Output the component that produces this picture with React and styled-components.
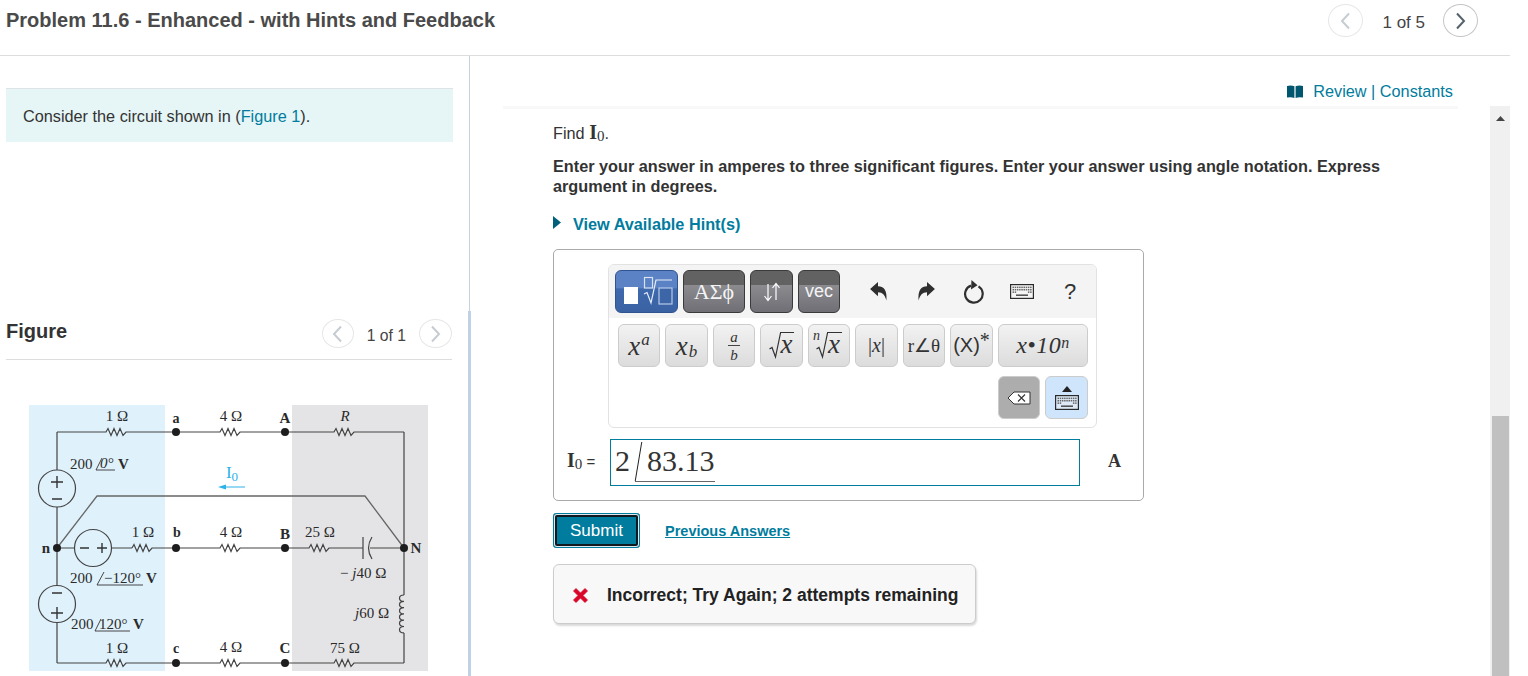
import styled, { createGlobalStyle } from "styled-components";

const GlobalStyle = createGlobalStyle`
  html, body {
    margin: 0;
    padding: 0;
    height: 676px;
    overflow: hidden;
    background: #fff;
    font-family: "Liberation Sans", Arial, sans-serif;
    font-size: 16.25px;
    color: #333;
  }
  * { box-sizing: border-box; }
`;

const TEAL = "#007c9e";

function Chevron({ left, color }) {
  return (
    <svg width="11" height="18" viewBox="0 0 11 18">
      <path
        d={left ? "M9 1.5 L2 9 L9 16.5" : "M2 1.5 L9 9 L2 16.5"}
        fill="none"
        stroke={color}
        strokeWidth="2"
      />
    </svg>
  );
}

function KeyboardIcon({ width = 24, height = 15, fill = "#f4f4f4" }) {
  const keys = [];
  for (let r = 0; r < 3; r++) {
    for (let c = 0; c < 9; c++) {
      if (r === 2 && c > 1 && c < 7) continue;
      keys.push(<rect key={`${r}-${c}`} x={2.5 + c * 2.2} y={2.6 + r * 2.4} width="1.5" height="1.5" fill="#666" />);
    }
  }
  return (
    <svg width={width} height={height} viewBox="0 0 24 15">
      <rect x="0.6" y="0.6" width="22.8" height="13.8" fill={fill} stroke="#2a2a2a" strokeWidth="1.2" />
      {keys}
      <rect x="6" y="10.4" width="12" height="1.6" fill="#555" />
    </svg>
  );
}

function Radical({ n, children }) {
  return (
    <RootWrap>
      {n && <RootIndex>{n}</RootIndex>}
      <svg width="12" height="27" viewBox="0 0 12 27">
        <path d="M0.5 17 L3 15.5 L6.5 25 L11.5 1 " fill="none" stroke="#333" strokeWidth="1.2" />
      </svg>
      <RootBody>{children}</RootBody>
    </RootWrap>
  );
}

// resistor zigzag inside a wire, cx is the middle of the resistor
function wire(y, x0, x1, centers = []) {
  let d = `M${x0} ${y}`;
  centers.forEach((cx) => {
    d += ` L${cx - 11} ${y} l2 -3.5 l3 7 l3 -7 l3 7 l3 -7 l3 7 l3 -3.5`;
  });
  return `${d} L${x1} ${y}`;
}

const NODES = [
  [176, 432], [285, 432],
  [176, 548], [285, 548],
  [176, 663], [285, 663],
  [57, 548], [404, 548],
];

function Label({ x, y, children, anchor = "middle", bold, italic, size = 15 }) {
  return (
    <text
      x={x}
      y={y}
      textAnchor={anchor}
      fontFamily="'Liberation Serif', serif"
      fontSize={size}
      fontWeight={bold ? 700 : 400}
      fontStyle={italic ? "italic" : "normal"}
      fill="#2a2a2a"
    >
      {children}
    </text>
  );
}

function Circuit() {
  return (
    <CircuitSvg viewBox="29 405 399 266" width="399" height="266">
      <rect x="29" y="405" width="136" height="266" fill="#dff1fb" />
      <rect x="292" y="405" width="136" height="266" fill="#e4e4e6" />

      <g fill="none" stroke="#444" strokeWidth="1.2">
        <path d={`${wire(432, 57, 404, [117, 231, 345])}`} />
        <path d={`${wire(663, 57, 404, [117, 231, 345])}`} />
        <path d="M57 432 V470 M57 507 V585 M57 623 V663" />
        <path d="M404 432 V595 M404 633 V663" />
        <path d="M57 548 H74 M112 548 H132" />
        <path d={wire(548, 132, 363, [143, 231, 320])} />
        <path d="M370 548 H404" />
        <path d="M363 537 V559" />
        <path d="M372 537 Q365 548 372 559" />
        <path d="M404 595 c-6 0 -6 6.3 0 6.3 c-6 0 -6 6.3 0 6.3 c-6 0 -6 6.3 0 6.3 c-6 0 -6 6.3 0 6.3 c-6 0 -6 6.3 0 6.3 c-6 0 -6 6.3 0 6.3" />
        <circle cx="57" cy="488.5" r="18.5" />
        <circle cx="93" cy="548" r="18.5" />
        <circle cx="57" cy="604" r="18.5" />
      </g>
      <path d="M57 548 L97 496 H365 L404 548" fill="none" stroke="#666" strokeWidth="1.3" />

      <g stroke="#333" strokeWidth="1.4" fill="none">
        <path d="M51 482 H63 M57 476 V488 M52 499 H62" />
        <path d="M80 548 H89 M97 548 H107 M102 543 V553" />
        <path d="M52 593 H62 M51 613 H63 M57 607 V619" />
        <path d="M96 470 L102 458 M96 470 H115" strokeWidth="0.9" />
        <path d="M97 585 L104 572 M97 585 H143" strokeWidth="0.9" />
        <path d="M95 631 L101 619 M95 631 H130" strokeWidth="0.9" />
      </g>

      {NODES.map(([x, y]) => (
        <circle key={`${x}-${y}`} cx={x} cy={y} r="4" fill="#1d1d1d" />
      ))}

      <Label x={117} y={421}>1 Ω</Label>
      <Label x={176} y={423} size={14} bold>a</Label>
      <Label x={231} y={421}>4 Ω</Label>
      <Label x={285} y={423} bold>A</Label>
      <Label x={345} y={421} italic>R</Label>

      <Label x={70} y={469} anchor="start">200</Label>
      <Label x={100} y={468} anchor="start" italic>0°</Label>
      <Label x={118} y={469} anchor="start" bold>V</Label>

      <text x={232} y={478} textAnchor="middle" fontFamily="'Liberation Serif', serif" fontSize="17" fill="#2eb2ea">
        I<tspan fontSize="13" dy="3">0</tspan>
      </text>
      <path d="M245 487 H224" stroke="#2eb2ea" strokeWidth="1" />
      <path d="M218 487 L226 484.5 V489.5 Z" fill="#2eb2ea" />

      <Label x={143} y={537}>1 Ω</Label>
      <Label x={177} y={537} size={14} bold>b</Label>
      <Label x={231} y={537}>4 Ω</Label>
      <Label x={285} y={539} bold>B</Label>
      <Label x={320} y={537}>25 Ω</Label>
      <Label x={46} y={553} bold>n</Label>
      <Label x={416} y={553} bold>N</Label>

      <Label x={70} y={583} anchor="start">200</Label>
      <Label x={104} y={583} anchor="start">−120°</Label>
      <Label x={146} y={583} anchor="start" bold>V</Label>
      <Label x={340} y={578} anchor="start">− <tspan fontStyle="italic">j</tspan>40 Ω</Label>
      <Label x={355} y={618} anchor="start"><tspan fontStyle="italic">j</tspan>60 Ω</Label>
      <Label x={71} y={629} anchor="start">200</Label>
      <Label x={99} y={629} anchor="start">120°</Label>
      <Label x={133} y={629} anchor="start" bold>V</Label>

      <Label x={117} y={653}>1 Ω</Label>
      <Label x={176} y={653} size={14} bold>c</Label>
      <Label x={231} y={652}>4 Ω</Label>
      <Label x={285} y={653} bold>C</Label>
      <Label x={345} y={653}>75 Ω</Label>
    </CircuitSvg>
  );
}

export default function App() {
  return (
    <Page>
      <GlobalStyle />
      <Header>
        <Title>Problem 11.6 - Enhanced - with Hints and Feedback</Title>
        <Pager $gap={18} $size={17}>
          <PagerButton $w={35} $h={33} $soft>
            <Chevron left color="#c6ccd2" />
          </PagerButton>
          <PagerText $left={1}>1 of 5</PagerText>
          <PagerButton $w={35} $h={33}>
            <Chevron color="#55626c" />
          </PagerButton>
        </Pager>
      </Header>

      <Split>
        <LeftPanel>
          <IntroBox>
            Consider the circuit shown in (<TextLink>Figure 1</TextLink>).
          </IntroBox>
          <FigureHead>
            <FigureTitle>Figure</FigureTitle>
            <Pager $gap={13} $size={15.7}>
              <PagerButton $w={32} $h={29} $soft>
                <Chevron left color="#c6ccd2" />
              </PagerButton>
              <PagerText $left={0}>1 of 1</PagerText>
              <PagerButton $w={33} $h={29} $soft>
                <Chevron color="#c6ccd2" />
              </PagerButton>
            </Pager>
          </FigureHead>
          <Circuit />
        </LeftPanel>

        <RightPanel>
          <Main>
            <ReviewRow>
              <svg width="16" height="13" viewBox="0 0 16 13">
                <path d="M0 1 Q4 0 7.4 1.2 V13 Q4 11.8 0 12.6 Z M16 1 Q12 0 8.6 1.2 V13 Q12 11.8 16 12.6 Z" fill="#00566f" />
              </svg>
              <TextLink>Review | Constants</TextLink>
            </ReviewRow>
            <TopRule />
            <Content>
              <FindLine>
                Find <Symbol>I<sub>0</sub></Symbol>.
              </FindLine>
              <Instructions>
                Enter your answer in amperes to three significant figures. Enter your answer using angle notation. Express argument in degrees.
              </Instructions>
              <HintRow>
                <HintArrow width="8" height="13" viewBox="0 0 8 13">
                  <path d="M0 0 L8 6.5 L0 13 Z" fill="#00607c" />
                </HintArrow>
                View Available Hint(s)
              </HintRow>

              <AnswerBox>
                <Toolbar>
                  <ToolbarTop>
                    <TemplateButton $w={63} $blue>
                      <svg width="61" height="41" viewBox="1 1 61 41">
                        <rect x="9" y="17" width="14" height="17" fill="#fff" />
                        <rect x="29.5" y="7.5" width="8" height="10.5" fill="none" stroke="#d7e2f2" strokeWidth="1.2" />
                        <path d="M29 24 L32 22.5 L36 33 L41 10 H57" fill="none" stroke="#e6edf7" strokeWidth="1.2" />
                        <rect x="44" y="18" width="13" height="16" fill="#3d66a8" stroke="#b7c9e6" strokeWidth="1.2" />
                      </svg>
                    </TemplateButton>
                    <TemplateButton $w={62}><GreekText>ΑΣϕ</GreekText></TemplateButton>
                    <TemplateButton $w={43}>
                      <svg width="18" height="20" viewBox="0 0 18 20">
                        <path d="M5 2 V18 M1.5 14 L5 18.5 L8.5 14 M13 18 V2 M9.5 6 L13 1.5 L16.5 6" fill="none" stroke="#fff" strokeWidth="1.2" />
                      </svg>
                    </TemplateButton>
                    <TemplateButton $w={42}><VecText>vec</VecText></TemplateButton>
                    <ToolIcons>
                      <ToolIcon>
                        <svg width="19" height="21" viewBox="0 0 18 20">
                          <path d="M1 7.5 L8.5 1 V5 C14 5 17.5 9 16.5 18.5 C15 13 13 10.8 8.5 10.6 V14.5 Z" fill="#2f2f2f" />
                        </svg>
                      </ToolIcon>
                      <ToolIcon>
                        <svg width="19" height="21" viewBox="0 0 18 20">
                          <path d="M17 7.5 L9.5 1 V5 C4 5 0.5 9 1.5 18.5 C3 13 5 10.8 9.5 10.6 V14.5 Z" fill="#2f2f2f" />
                        </svg>
                      </ToolIcon>
                      <ToolIcon>
                        <svg width="22" height="26" viewBox="0 0 22 26">
                          <path d="M8 6.6 A8.8 8.8 0 1 0 15.5 7.4" fill="none" stroke="#2f2f2f" strokeWidth="2.2" />
                          <path d="M8.5 1 L14.5 6.2 L8 10.5 Z" fill="#2f2f2f" />
                        </svg>
                      </ToolIcon>
                      <ToolIcon><KeyboardIcon /></ToolIcon>
                      <ToolIcon><HelpMark>?</HelpMark></ToolIcon>
                    </ToolIcons>
                  </ToolbarTop>

                  <KeyRow>
                    <MathKey $w={42}><Big>x</Big><Sup>a</Sup></MathKey>
                    <MathKey $w={43}><Big>x</Big><Sub>b</Sub></MathKey>
                    <MathKey $w={42}>
                      <Fraction><span>a</span><span>b</span></Fraction>
                    </MathKey>
                    <MathKey $w={43}><Radical>x</Radical></MathKey>
                    <MathKey $w={42}><Radical n="n">x</Radical></MathKey>
                    <MathKey $w={43}><AbsText>|<i>x</i>|</AbsText></MathKey>
                    <MathKey $w={42}><PolarText>r∠θ</PolarText></MathKey>
                    <MathKey $w={43}><ConjText>(X)<ConjStar>*</ConjStar></ConjText></MathKey>
                    <MathKey $w={90}><SciText>x•10<SciPow>n</SciPow></SciText></MathKey>
                  </KeyRow>
                  <ActionRow>
                    <ActionKey $w={42} $bg="#adadad">
                      <svg width="24" height="14" viewBox="0 0 24 14">
                        <path d="M7 1 H23 V13 H7 L1 7 Z" fill="#fff" stroke="#333" strokeWidth="1" />
                        <path d="M11 3.5 L18 10.5 M18 3.5 L11 10.5" stroke="#333" strokeWidth="1.1" />
                      </svg>
                    </ActionKey>
                    <ActionKey $w={43} $bg="#cfe5fb">
                      <KeyStack>
                        <svg width="10" height="6" viewBox="0 0 10 6">
                          <path d="M0 6 L5 0 L10 6 Z" fill="#222" />
                        </svg>
                        <KeyboardIcon fill="#dde9f6" />
                      </KeyStack>
                    </ActionKey>
                  </ActionRow>
                </Toolbar>

                <InputRow>
                  <InputLabel><Symbol>I<sub>0</sub></Symbol> =</InputLabel>
                  <AnswerInput>
                    2<AngleValue>83.13</AngleValue>
                  </AnswerInput>
                  <UnitLabel>A</UnitLabel>
                </InputRow>
              </AnswerBox>

              <SubmitRow>
                <SubmitButton>Submit</SubmitButton>
                <PreviousLink>Previous Answers</PreviousLink>
              </SubmitRow>

              <Feedback>
                <svg width="17" height="17" viewBox="0 0 17 17">
                  <path d="M1.5 4 L4 1.5 L8.5 6 L13 1.5 L15.5 4 L11 8.5 L15.5 13 L13 15.5 L8.5 11 L4 15.5 L1.5 13 L6 8.5 Z" fill="#d9062a" stroke="#d9062a" strokeWidth="0.8" />
                </svg>
                <span>Incorrect; Try Again; 2 attempts remaining</span>
              </Feedback>
            </Content>
          </Main>
          <ScrollTrack>
            <ScrollArrow>
              <svg width="9" height="5" viewBox="0 0 9 5">
                <path d="M0 5 L4.5 0 L9 5 Z" fill="#444" />
              </svg>
            </ScrollArrow>
            <ScrollThumb />
          </ScrollTrack>
        </RightPanel>
      </Split>
    </Page>
  );
}

const Page = styled.div`
  display: flex;
  flex-direction: column;
  width: 1510px;
  height: 676px;
  overflow: hidden;
`;

const Header = styled.header`
  display: flex;
  align-items: flex-start;
  justify-content: space-between;
  flex: 0 0 56px;
  padding: 4px 32px 0 6px;
  border-bottom: 1px solid #ddd;
`;

const Title = styled.h1`
  margin: 5px 0 0;
  font-size: 20px;
  line-height: 23px;
  font-weight: 700;
  color: #4a4a4a;
`;

const Pager = styled.div`
  display: flex;
  align-items: center;
  gap: ${(p) => p.$gap}px;
  font-size: ${(p) => p.$size}px;
  color: #444;
`;

const PagerText = styled.span`
  margin-left: ${(p) => p.$left}px;
  padding-top: 4px;
`;

const PagerButton = styled.div`
  display: flex;
  align-items: center;
  justify-content: center;
  width: ${(p) => p.$w}px;
  height: ${(p) => p.$h}px;
  border: 1px solid ${(p) => (p.$soft ? "#e6e6e6" : "#c4c4c4")};
  border-radius: 50%;
`;

const Split = styled.div`
  display: flex;
  flex: 1;
  min-height: 0;
`;

const LeftPanel = styled.section`
  position: relative;
  flex: 0 0 470px;
  padding: 32px 16px 0 6px;
  border-right: 1px solid #c9d1da;

  &::after {
    content: "";
    position: absolute;
    top: 255px;
    bottom: 0;
    right: -2px;
    width: 3px;
    background: #c0d1e3;
  }
`;

const IntroBox = styled.div`
  display: flex;
  align-items: center;
  height: 54px;
  padding: 2px 0 0 17px;
  background: #e6f5f6;
  border-top: 1px solid #dde3e6;
  white-space: pre-wrap;
`;

const TextLink = styled.span`
  color: ${TEAL};
`;

const FigureHead = styled.div`
  display: flex;
  align-items: flex-start;
  justify-content: space-between;
  width: 446px;
  height: 43px;
  margin-top: 175px;
  padding-top: 2px;
  border-bottom: 1px solid #ddd;
`;

const FigureTitle = styled.h2`
  margin: 0;
  font-size: 20px;
  line-height: 24px;
  font-weight: 700;
  color: #333;
`;

const CircuitSvg = styled.svg`
  display: block;
  margin: 45px 0 0 23px;
`;

const RightPanel = styled.section`
  display: flex;
  flex: 1;
  min-width: 0;
`;

const Main = styled.div`
  flex: 1;
  min-width: 0;
`;

const ReviewRow = styled.div`
  display: flex;
  align-items: center;
  justify-content: flex-end;
  gap: 10px;
  height: 50px;
  padding: 21px 37px 0 0;
`;

const TopRule = styled.div`
  height: 3px;
  margin: 0 32px 0 33px;
  background: #f8f8f8;
`;

const Content = styled.div`
  padding: 14px 0 0 83px;
`;

const FindLine = styled.div`
  height: 20px;
  line-height: 20px;
`;

const Symbol = styled.span`
  font-family: "Liberation Serif", serif;
  font-weight: 700;
  font-size: 20px;
  line-height: 0;

  sub {
    font-size: 15px;
    font-weight: 400;
    line-height: 0;
    vertical-align: -2px;
  }
`;

const Instructions = styled.p`
  width: 850px;
  margin: 13px 0 0;
  font-weight: 700;
  line-height: 20px;
`;

const HintRow = styled.div`
  display: flex;
  align-items: center;
  gap: 12px;
  height: 20px;
  margin-top: 18px;
  font-weight: 700;
  color: ${TEAL};
`;

const HintArrow = styled.svg`
  margin-bottom: 4px;
`;

const AnswerBox = styled.div`
  width: 591px;
  height: 252px;
  margin-top: 15px;
  padding: 14px 0 0 54px;
  border: 1px solid #aaa;
  border-radius: 5px;
`;

const Toolbar = styled.div`
  width: 489px;
  height: 164px;
  border: 1px solid #e2e2e2;
  border-radius: 6px;
  overflow: hidden;
`;

const ToolbarTop = styled.div`
  display: flex;
  gap: 5px;
  height: 53px;
  padding: 5px 0 0 6px;
  background: #f4f4f4;
`;

const TemplateButton = styled.div`
  display: flex;
  align-items: center;
  justify-content: center;
  flex: 0 0 ${(p) => p.$w}px;
  height: 43px;
  border: 1px solid ${(p) => (p.$blue ? "#30548f" : "#3a3a3a")};
  border-radius: 6px;
  background: ${(p) =>
    p.$blue
      ? "linear-gradient(#5a82c4 0, #5a82c4 42%, #3f69ad 43%, #3a62a3 100%)"
      : "linear-gradient(#626262 0, #626262 33%, #8b8b90 34%, #6f6f75 100%)"};
`;

const GreekText = styled.span`
  font-family: "Liberation Serif", serif;
  font-size: 22px;
  color: #f4f4f4;
`;

const VecText = styled.span`
  font-size: 18px;
  color: #f4f4f4;
`;

const ToolIcons = styled.div`
  display: flex;
  margin-left: 9px;
`;

const ToolIcon = styled.div`
  display: flex;
  align-items: center;
  justify-content: center;
  width: 48px;
  height: 43px;
`;

const HelpMark = styled.span`
  font-size: 22px;
  color: #333;
`;

const KeyRow = styled.div`
  display: flex;
  gap: 5px;
  padding: 6px 0 0 9px;
`;

const MathKey = styled.div`
  display: flex;
  align-items: center;
  justify-content: center;
  flex: 0 0 ${(p) => p.$w}px;
  height: 43px;
  border: 1px solid #ccc;
  border-radius: 6px;
  background: linear-gradient(#f2f2f2, #dcdcdc);
  font-family: "Liberation Serif", serif;
  color: #333;
`;

const Big = styled.i`
  font-size: 27px;
  line-height: 30px;
`;

const Sup = styled.i`
  margin: -12px 0 0 1px;
  font-size: 17px;
`;

const Sub = styled.i`
  margin: 12px 0 0 1px;
  font-size: 17px;
`;

const Fraction = styled.div`
  display: flex;
  flex-direction: column;
  align-items: center;
  font-style: italic;
  font-size: 15px;
  line-height: 14px;

  span:first-child {
    padding: 0 2px 1px;
    border-bottom: 1px solid #444;
  }
  span:last-child {
    padding-top: 2px;
  }
`;

const RootWrap = styled.div`
  position: relative;
  display: flex;
  align-items: flex-start;
`;

const RootIndex = styled.i`
  position: absolute;
  left: -3px;
  top: -4px;
  font-size: 14px;
`;

const RootBody = styled.i`
  display: block;
  height: 26px;
  padding: 0 2px 0 1px;
  margin-left: -1px;
  border-top: 1.2px solid #333;
  font-size: 27px;
  line-height: 23px;
`;

const AbsText = styled.span`
  font-size: 20px;
`;

const PolarText = styled.span`
  font-size: 19px;
`;

const ConjText = styled.span`
  display: flex;
  font-family: "Liberation Sans", sans-serif;
  font-size: 20px;
`;

const ConjStar = styled.span`
  margin-top: -5px;
  font-family: "Liberation Serif", serif;
  font-size: 20px;
`;

const SciText = styled.i`
  font-size: 24px;
  letter-spacing: 0.5px;
`;

const SciPow = styled.span`
  vertical-align: 5px;
  font-size: 16px;
`;

const ActionRow = styled.div`
  display: flex;
  justify-content: flex-end;
  gap: 5px;
  padding: 9px 8px 0 0;
`;

const ActionKey = styled.div`
  display: flex;
  align-items: center;
  justify-content: center;
  width: ${(p) => p.$w}px;
  height: 43px;
  border: 1px solid #ccc;
  border-radius: 6px;
  background: ${(p) => p.$bg};
`;

const KeyStack = styled.div`
  display: flex;
  flex-direction: column;
  align-items: center;
  gap: 3px;
`;

const InputRow = styled.div`
  display: flex;
  align-items: center;
  margin-top: 11px;
`;

const InputLabel = styled.div`
  flex: 0 0 43px;
  margin: 0 0 3px -41px;
  font-size: 15px;
  white-space: nowrap;
`;

const AnswerInput = styled.div`
  display: flex;
  align-items: flex-start;
  width: 470px;
  height: 47px;
  padding: 3px 0 0 4px;
  border: 1px solid ${TEAL};
  font-family: "Liberation Serif", serif;
  font-size: 30px;
  line-height: 36px;
  color: #333;
`;

const AngleValue = styled.span`
  position: relative;
  height: 39px;
  margin-left: 5px;
  padding-left: 12px;
  border-bottom: 1px solid #666;

  &::before {
    content: "";
    position: absolute;
    left: 3px;
    bottom: 0;
    height: 39px;
    width: 1px;
    background: #222;
    transform: skewX(-9.5deg);
  }
`;

const UnitLabel = styled.div`
  margin: 0 0 2px 28px;
  font-family: "Liberation Serif", serif;
  font-weight: 700;
  font-size: 18px;
`;

const SubmitRow = styled.div`
  display: flex;
  align-items: center;
  gap: 25px;
  margin-top: 12px;
`;

const SubmitButton = styled.div`
  display: flex;
  align-items: center;
  justify-content: center;
  width: 87px;
  height: 35px;
  background: ${TEAL};
  border-radius: 4px;
  box-shadow: inset 0 0 0 1px ${TEAL}, inset 0 0 0 2px #dfe9ec, inset 0 0 0 4px #101820;
  color: #fff;
  font-size: 17px;
`;

const PreviousLink = styled.span`
  font-size: 14.5px;
  font-weight: 700;
  color: ${TEAL};
  text-decoration: underline;
`;

const Feedback = styled.div`
  display: flex;
  align-items: center;
  gap: 18px;
  width: 423px;
  height: 60px;
  margin-top: 16px;
  padding: 3px 0 0 18px;
  background: #f8f8f8;
  border: 1px solid #ccc;
  border-radius: 6px;
  box-shadow: 1px 2px 2px rgba(0, 0, 0, 0.15);
  font-size: 17.5px;
  font-weight: 700;
  color: #222;
  white-space: nowrap;
`;

const ScrollTrack = styled.div`
  display: flex;
  flex-direction: column;
  align-items: center;
  flex: 0 0 20px;
  margin-top: 50px;
  background: #f0f0f0;
`;

const ScrollArrow = styled.div`
  display: flex;
  align-items: center;
  justify-content: center;
  height: 24px;
`;

const ScrollThumb = styled.div`
  width: 17px;
  height: 260px;
  margin-top: 286px;
  background: #c0c0c0;
`;
